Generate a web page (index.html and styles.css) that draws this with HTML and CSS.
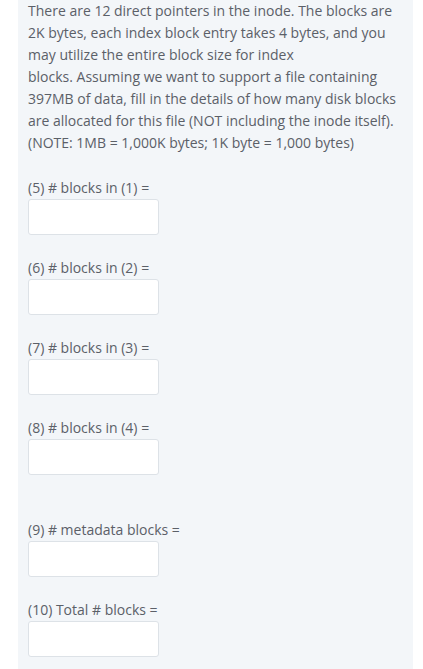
FILE: index.html
```html
<!DOCTYPE html>
<html>
<head>
<meta charset="utf-8">
<link rel="stylesheet" href="styles.css">
</head>
<body>
<div class="panel">
  <p class="question">There are 12 direct pointers in the inode. The blocks are 2K bytes, each index block entry takes 4 bytes, and you may utilize the entire block size for index<br>blocks. Assuming we want to support a file containing 397MB of data, fill in the details of how many disk blocks are allocated for this file (NOT including the inode itself). (NOTE: 1MB = 1,000K bytes; 1K byte = 1,000 bytes)</p>
  <div class="field"><label class="label">(5) # blocks in (1) =</label><input class="answer" type="text"></div>
  <div class="field"><label class="label">(6) # blocks in (2) =</label><input class="answer" type="text"></div>
  <div class="field"><label class="label">(7) # blocks in (3) =</label><input class="answer" type="text"></div>
  <div class="field"><label class="label">(8) # blocks in (4) =</label><input class="answer" type="text"></div>
  <div class="spacer"></div>
  <div class="field"><label class="label">(9) # metadata blocks =</label><input class="answer" type="text"></div>
  <div class="field"><label class="label">(10) Total # blocks =</label><input class="answer" type="text"></div>
</div>
</body>
</html>
```
FILE: styles.css
```css
html, body {
  margin: 0;
  padding: 0;
  background: #ffffff;
}
body {
  font-family: "Open Sans", "Liberation Sans", sans-serif;
  font-size: 14px;
  line-height: 22px;
  color: #5b6068;
}
.panel {
  margin: 0 10px 0 18px;
  padding: 0 10px 14px 10px;
  background: #f3f6f9;
  min-height: 669px;
  box-sizing: border-box;
}
.question {
  margin: 0 0 23px 0;
}
.field {
  display: flex;
  flex-direction: column;
  align-items: flex-start;
  margin-bottom: 22px;
}
.label {
  display: block;
  height: 22px;
}
.answer {
  width: 131px;
  height: 36px;
  box-sizing: border-box;
  border: 1px solid #dde2e7;
  border-radius: 3px;
  background: #ffffff;
  margin: 0;
  padding: 0 6px;
  font: inherit;
}
.spacer {
  height: 22px;
}
```
